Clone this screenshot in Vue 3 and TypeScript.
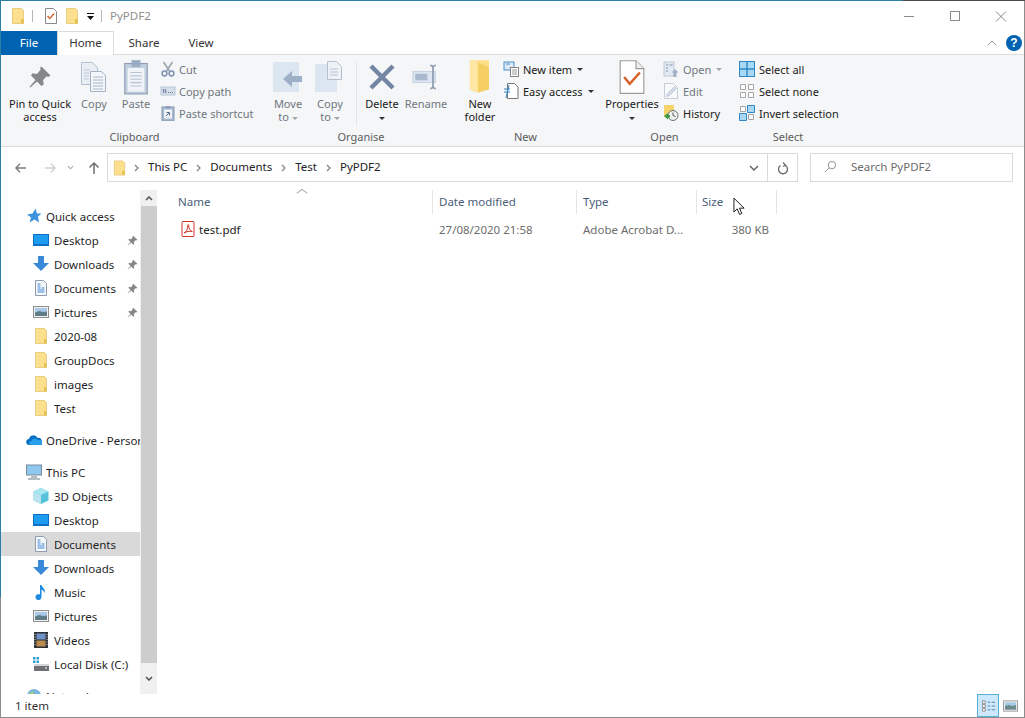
<script setup lang="ts">
interface NavItem {
  label: string
  icon: string
  pinned?: boolean
  active?: boolean
  top?: boolean
  gap?: boolean
}

const clipboardSmall = [
  { label: 'Cut', icon: 'i-cut' },
  { label: 'Copy path', icon: 'i-copypath' },
  { label: 'Paste shortcut', icon: 'i-shortcut' },
]
const newSmall = [
  { label: 'New item', icon: 'i-newitem', drop: true },
  { label: 'Easy access', icon: 'i-easy', drop: true },
]
const openSmall = [
  { label: 'Open', icon: 'i-open', drop: true, muted: true },
  { label: 'Edit', icon: 'i-edit', muted: true },
  { label: 'History', icon: 'i-history' },
]
const selectSmall = [
  { label: 'Select all', icon: 'i-selall' },
  { label: 'Select none', icon: 'i-selnone' },
  { label: 'Invert selection', icon: 'i-selinv' },
]

const crumbs = ['This PC', 'Documents', 'Test', 'PyPDF2']

const nav: NavItem[] = [
  { label: 'Quick access', icon: 'i-star', top: true },
  { label: 'Desktop', icon: 'i-desktop', pinned: true },
  { label: 'Downloads', icon: 'i-down', pinned: true },
  { label: 'Documents', icon: 'i-docs', pinned: true },
  { label: 'Pictures', icon: 'i-pics', pinned: true },
  { label: '2020-08', icon: 'i-folder' },
  { label: 'GroupDocs', icon: 'i-folder' },
  { label: 'images', icon: 'i-folder' },
  { label: 'Test', icon: 'i-folder' },
  { label: 'OneDrive - Personal', icon: 'i-cloud', top: true, gap: true },
  { label: 'This PC', icon: 'i-pc', top: true, gap: true },
  { label: '3D Objects', icon: 'i-cube' },
  { label: 'Desktop', icon: 'i-desktop' },
  { label: 'Documents', icon: 'i-docs', active: true },
  { label: 'Downloads', icon: 'i-down' },
  { label: 'Music', icon: 'i-music' },
  { label: 'Pictures', icon: 'i-pics' },
  { label: 'Videos', icon: 'i-video' },
  { label: 'Local Disk (C:)', icon: 'i-disk' },
  { label: 'Network', icon: 'i-net', top: true, gap: true },
]
</script>

<template>
  <div class="window">
    <svg class="defs" xmlns="http://www.w3.org/2000/svg">
      <symbol id="i-folder" viewBox="0 0 16 16">
        <path d="M2.5.5h9l2 2v13h-11z" fill="#fde08e" stroke="#e6cd83" />
        <path d="M11 11h2.5v4.5H11z" fill="#e8c04c" />
      </symbol>
      <symbol id="i-props" viewBox="0 0 16 16">
        <path d="M2.5.5h8l3 3v12h-11z" fill="#fff" stroke="#8a8a8a" />
        <path d="M4.5 8l2.2 2.5 4.5-5" fill="none" stroke="#d9622b" stroke-width="1.3" />
      </symbol>
      <symbol id="i-pin" viewBox="0 0 16 16">
        <path d="M9 1l6 6-1.5 1-1-.5L10 10l.5 3-1.5 1-3-3-4.500 4-.5-.5 4-4.500-3-3 1-1.500 3 .5L8.500 3 8 2z" fill="#85878a" />
      </symbol>
      <symbol id="i-copy" viewBox="0 0 32 32">
        <path d="M3.5 1.5h11l5 5v17h-16z" fill="#e9eef5" stroke="#b3c0d0" />
        <path d="M12.5 10.5h11l4 4v16h-15z" fill="#f2f5f9" stroke="#a4b2c4" />
        <path d="M15 16h10M15 19h10M15 22h10M15 25h10M15 28h10" stroke="#a9b8cb" />
        <path d="M6 9h6M6 12h5M6 15h5M6 18h5" stroke="#bcc8d8" />
      </symbol>
      <symbol id="i-paste" viewBox="0 0 24 32">
        <rect x="2" y="4" width="20" height="27" fill="#c2cede" stroke="#8b9cb3" />
        <rect x="4.5" y="8" width="15" height="21" fill="#f0f3f7" />
        <path d="M7 12h10M7 15h10M7 18h10M7 21h10M7 24h10" stroke="#b8c5d6" />
        <rect x="8" y="1" width="8" height="6" fill="#9badc4" />
      </symbol>
      <symbol id="i-cut" viewBox="0 0 16 16">
        <path d="M3.500 1l6 9M12.500 1l-6 9" stroke="#9aa2ab" stroke-width="1.5" fill="none" />
        <circle cx="4.5" cy="12.5" r="2.4" fill="none" stroke="#7f93b3" stroke-width="1.5" />
        <circle cx="11.5" cy="12.5" r="2.4" fill="none" stroke="#7f93b3" stroke-width="1.5" />
      </symbol>
      <symbol id="i-copypath" viewBox="0 0 16 16">
        <rect x="1" y="4" width="14" height="8" fill="#d4deeb" stroke="#b9c6d6" />
        <path d="M3 6l1 4M5 6l1 4M8 9.500h1M10 9.500h1M12 9.500h1" stroke="#5e7390" />
      </symbol>
      <symbol id="i-shortcut" viewBox="0 0 16 16">
        <rect x="2" y="2" width="12" height="14" fill="#a9b9cd" stroke="#8497b0" />
        <rect x="4" y="4.5" width="8" height="9" fill="#eef2f6" />
        <path d="M6 11l3-3M6.500 7.500H9.500V10.500" stroke="#5b7190" fill="none" />
        <rect x="5.5" y="1" width="5" height="2.5" fill="#8ea1b9" />
      </symbol>
      <symbol id="i-move" viewBox="0 0 32 32">
        <rect x="1" y="1" width="26" height="30" fill="#dbe6f1" />
        <path d="M11 18l9-8v5h10v6H20v5z" fill="#9eb0c8" />
      </symbol>
      <symbol id="i-copyto" viewBox="0 0 32 32">
        <rect x="1" y="3" width="22" height="28" fill="#dbe6f1" />
        <path d="M13.500.5h9l5 5v13h-14z" fill="#eef2f7" stroke="#b3c0d0" />
        <path d="M16 8h8M16 11h8M16 14h8" stroke="#b3c0d0" />
      </symbol>
      <symbol id="i-delete" viewBox="0 0 28 28">
        <path d="M3 3l22 22M25 3L3 25" stroke="#7385a3" stroke-width="4.5" />
      </symbol>
      <symbol id="i-rename" viewBox="0 0 30 28">
        <rect x="1" y="8" width="24" height="12" fill="#dce5f0" stroke="#c3d0df" />
        <rect x="3.5" y="10.5" width="13" height="7" fill="#a9b9cf" />
        <path d="M19.500 1.500c2 0 2.500 1 3 2 .5-1 1-2 3-2M22.500 3.500v21M19.500 26.500c2 0 2.500-1 3-2 .5 1 1 2 3 2" fill="none" stroke="#8b9aae" stroke-width="1.8" />
      </symbol>
      <symbol id="i-newfolder" viewBox="0 0 20 32">
        <path d="M1 1h17v25l-11 0v4l-6-3z" fill="#fddf87" />
        <path d="M8 3l10 4v20l-10 3z" fill="#f6cf64" />
        <path d="M1 1h7v29l-7-3z" fill="#fde7a3" />
      </symbol>
      <symbol id="i-newitem" viewBox="0 0 16 16">
        <rect x="1" y="1" width="10" height="8" fill="#dceaf7" stroke="#4a90c8" />
        <path d="M3 3h4" stroke="#4a90c8" />
        <rect x="7.5" y="6.5" width="8" height="9" fill="#fff" stroke="#858585" />
        <path d="M9 9h5M9 11h5M9 13h5" stroke="#9a9a9a" />
      </symbol>
      <symbol id="i-easy" viewBox="0 0 16 16">
        <path d="M4.500.5h7L15 4v11.500H4.500z" fill="#fff" stroke="#777" />
        <path d="M1 6h6M1 9h6M6 2l-3 13" stroke="#2d7fbf" fill="none" />
      </symbol>
      <symbol id="i-propsbig" viewBox="0 0 24 32">
        <path d="M1.500 1.500h14l7 7v22h-21z" fill="#fff" stroke="#9a9a9a" />
        <path d="M15.500 1.500v7h7" fill="#eee" stroke="#9a9a9a" />
        <path d="M5 16l5 6 9-10" fill="none" stroke="#d9622b" stroke-width="2.2" />
      </symbol>
      <symbol id="i-open" viewBox="0 0 16 16">
        <rect x="1" y="1" width="10" height="14" fill="#e2e9f1" stroke="#bcc8d6" />
        <path d="M3 4h2M3 7h2M3 10h2M6.500 4h3" stroke="#9fb0c5" stroke-width="1.5" />
        <path d="M12 8l3.500 3.500h-2V16h-3v-4.500h-2z" fill="#9fb0c5" />
      </symbol>
      <symbol id="i-edit" viewBox="0 0 16 16">
        <path d="M1.500.5h9l4 4v11h-13z" fill="#f7f9fb" stroke="#c5ccd5" />
        <path d="M3.500 13.500l1-3 7-7 2 2-7 7z" fill="#d3dce6" stroke="#b4c0ce" stroke-width=".7" />
      </symbol>
      <symbol id="i-history" viewBox="0 0 16 16">
        <rect x="1" y="0" width="10" height="12" fill="#f6d36a" />
        <circle cx="10" cy="10.5" r="5" fill="#eef0ee" stroke="#66706a" />
        <path d="M10 7.500v3l2.500 1" stroke="#555" fill="none" />
        <path d="M1 11l4-3v2h2v2.500H5v2z" fill="#3e9a46" />
      </symbol>
      <symbol id="i-selall" viewBox="0 0 16 16">
        <rect x=".5" y=".5" width="15" height="15" fill="#a8d8f5" stroke="#2f88c5" />
        <path d="M8 0v16M0 8h16" stroke="#2f88c5" stroke-width="1.4" />
      </symbol>
      <symbol id="i-selnone" viewBox="0 0 16 16">
        <path d="M1.500 1.500h5v5h-5zM9.500 1.500h5v5h-5zM1.500 9.500h5v5h-5zM9.500 9.500h5v5h-5z" fill="#fff" stroke="#a5a5a5" />
      </symbol>
      <symbol id="i-selinv" viewBox="0 0 16 16">
        <path d="M1.500 1.500h5v5h-5zM9.500 9.500h5v5h-5z" fill="#fff" stroke="#a5a5a5" />
        <path d="M8.500.5h7v7h-7zM.5 8.500h7v7h-7z" fill="#a8d8f5" stroke="#2f88c5" />
      </symbol>
      <symbol id="i-star" viewBox="0 0 16 16">
        <path d="M9.500.5l1.500 5h4.500l-3.500 3 1 6-4.500-3-5 3 1.500-5-4-3 5.500-1z" fill="#3d94dc" />
      </symbol>
      <symbol id="i-desktop" viewBox="0 0 16 16">
        <rect x="0" y="2" width="16" height="12" fill="#0f6fc6" />
        <rect x="1" y="3" width="14" height="9" fill="#1e9cf0" />
      </symbol>
      <symbol id="i-down" viewBox="0 0 16 16">
        <path d="M5 0h6v7h5l-8 8-8-8h5z" fill="#3a88d8" />
      </symbol>
      <symbol id="i-docs" viewBox="0 0 16 16">
        <path d="M2.500.5h8l3 3v12h-11z" fill="#f7f9fc" stroke="#8d9bac" />
        <path d="M4.500 4h3M4.500 6h3M8.500 8h3M4.500 8h3M4.500 10h7M4.500 12h7" stroke="#3f8bd0" />
      </symbol>
      <symbol id="i-pics" viewBox="0 0 16 16">
        <rect x=".5" y="2.5" width="15" height="11" fill="#f2f2f2" stroke="#8e8e8e" />
        <rect x="2" y="4" width="12" height="4.5" fill="#a9c9e6" />
        <path d="M2 8.500l4-1.500 4 1 4-.5V12H2z" fill="#5f7b88" />
      </symbol>
      <symbol id="i-cloud" viewBox="0 0 16 12">
        <path d="M3.500 11a3 3 0 0 1-.5-6 4.500 4.500 0 0 1 8.500-1A3.500 3.500 0 0 1 13 11z" fill="#0a6fc4" />
        <path d="M5 11a2 2 0 0 1 .5-4 3.500 3.500 0 0 1 6.500-.5 2.500 2.500 0 0 1 3.800 4.500z" fill="#2aa0ea" />
      </symbol>
      <symbol id="i-pc" viewBox="0 0 16 16">
        <rect x=".5" y="1" width="15" height="10" fill="#8ec8ef" stroke="#7a8a99" />
        <path d="M5 13h6M2 15h12" stroke="#9aa5b0" stroke-width="1.3" />
      </symbol>
      <symbol id="i-cube" viewBox="0 0 16 16">
        <path d="M8 0l7.500 3.500v9L8 16 .5 12.500v-9z" fill="#56c2dc" />
        <path d="M8 0l7.500 3.500L8 7 .5 3.500z" fill="#a8e6f2" />
        <path d="M.5 3.500L8 7v9L.5 12.500z" fill="#b9e4ee" />
      </symbol>
      <symbol id="i-music" viewBox="0 0 16 16">
        <path d="M7 1h1.500c.5 3 4.500 3.500 3 8-.5-2-2-3-3-3.500V13a3 3 0 1 1-1.500-2.500z" fill="#1f8ae0" />
      </symbol>
      <symbol id="i-video" viewBox="0 0 16 16">
        <rect x="1" y="0" width="14" height="16" fill="#2f3136" />
        <rect x="3.5" y="1.5" width="9" height="6" fill="#6f93c6" />
        <rect x="3.5" y="8.5" width="9" height="6" fill="#b98b4f" />
        <path d="M2 2v12M14 2v12" stroke="#cfcfcf" stroke-dasharray="1 1.5" />
      </symbol>
      <symbol id="i-disk" viewBox="0 0 16 16">
        <path d="M0 1h2.500v2.500H0zM3.500 1H6v2.500H3.500zM0 4.500h2.500V7H0zM3.500 4.500H6V7H3.500z" fill="#2a9fd8" />
        <rect x="1" y="9" width="15" height="6" fill="#6e7073" />
        <rect x="1" y="8" width="15" height="2" fill="#d5d7d9" />
        <rect x="12" y="11.5" width="2" height="1" fill="#fff" />
      </symbol>
      <symbol id="i-net" viewBox="0 0 16 16">
        <circle cx="8" cy="8" r="7" fill="#7ab4de" />
        <path d="M3 5l4-2 1 3-3 2zM9 9l4-1-1 4-3 1z" fill="#9ccb8c" />
      </symbol>
      <symbol id="i-pdf" viewBox="0 0 14 16">
        <rect x="1" y=".5" width="12" height="15" rx="1" fill="#fff" stroke="#d3312a" />
        <path d="M3 12c2-.5 4-4 3.800-7.500C6.700 3 7.800 3 7.700 4.500 7.500 7 9 10 11.300 10.500 9 10 5 10.500 3 12z" fill="none" stroke="#d3312a" />
      </symbol>
    </svg>

    <header class="titlebar">
      <div class="quick">
        <svg class="qa-ico"><use href="#i-folder" /></svg>
        <span class="qa-sep"></span>
        <svg class="qa-ico qa-ico--doc"><use href="#i-props" /></svg>
        <svg class="qa-ico"><use href="#i-folder" /></svg>
        <svg class="qa-more" viewBox="0 0 9 8"><path d="M1 .5h7" stroke="#111" /><path d="M1 3h7L4.500 7z" fill="#111" /></svg>
        <span class="qa-sep"></span>
        <span class="title">PyPDF2</span>
      </div>
      <div class="controls">
        <svg viewBox="0 0 46 30"><path d="M18 15.5h10" stroke="#8a8a8a" /></svg>
        <svg viewBox="0 0 46 30"><rect x="18.5" y="10.5" width="9" height="9" fill="none" stroke="#8a8a8a" /></svg>
        <svg viewBox="0 0 46 30"><path d="M18 10.5l10 10M28 10.5l-10 10" stroke="#8a8a8a" /></svg>
      </div>
    </header>

    <nav class="tabs">
      <span class="tab tab--file">File</span>
      <span class="tab tab--on">Home</span>
      <span class="tab">Share</span>
      <span class="tab">View</span>
      <span class="tabs__fill"></span>
      <svg class="tabs__chev" viewBox="0 0 10 6"><path d="M1 5l4-4 4 4" fill="none" stroke="#9a9a9a" /></svg>
      <span class="help">?</span>
    </nav>

    <section class="ribbon">
      <div class="group group--clip">
        <div class="group__body">
          <div class="big big--pin">
            <svg class="ico-pin"><use href="#i-pin" /></svg>
            <span>Pin to Quick<br />access</span>
          </div>
          <div class="big big--w42 muted">
            <svg class="ico-32"><use href="#i-copy" /></svg>
            <span>Copy</span>
          </div>
          <div class="big big--w42 muted">
            <svg class="ico-32"><use href="#i-paste" /></svg>
            <span>Paste</span>
          </div>
          <ul class="small small--clip muted">
            <li v-for="s in clipboardSmall" :key="s.label">
              <svg><use :href="'#' + s.icon" /></svg>{{ s.label }}
            </li>
          </ul>
        </div>
        <div class="group__label">Clipboard</div>
      </div>

      <div class="group group--org">
        <div class="group__body">
          <div class="big big--w40 muted">
            <svg class="ico-32"><use href="#i-move" /></svg>
            <span>Move<br />to <i class="caret caret--muted"></i></span>
          </div>
          <div class="big big--w44 muted">
            <svg class="ico-32"><use href="#i-copyto" /></svg>
            <span>Copy<br />to <i class="caret caret--muted"></i></span>
          </div>
          <span class="vline"></span>
          <div class="big big--w44">
            <svg class="ico-28"><use href="#i-delete" /></svg>
            <span>Delete<br /><i class="caret"></i></span>
          </div>
          <div class="big big--w44 muted">
            <svg class="ico-28"><use href="#i-rename" /></svg>
            <span>Rename</span>
          </div>
        </div>
        <div class="group__label">Organise</div>
      </div>

      <div class="group group--new">
        <div class="group__body">
          <div class="big big--w52">
            <svg class="ico-32"><use href="#i-newfolder" /></svg>
            <span>New<br />folder</span>
          </div>
          <ul class="small small--new">
            <li v-for="s in newSmall" :key="s.label">
              <svg><use :href="'#' + s.icon" /></svg>{{ s.label }}<i v-if="s.drop" class="caret caret--side"></i>
            </li>
          </ul>
        </div>
        <div class="group__label">New</div>
      </div>

      <div class="group group--open">
        <div class="group__body">
          <div class="big big--w54">
            <svg class="ico-32"><use href="#i-propsbig" /></svg>
            <span>Properties<br /><i class="caret"></i></span>
          </div>
          <ul class="small small--open">
            <li v-for="s in openSmall" :key="s.label" :class="{ muted: s.muted }">
              <svg><use :href="'#' + s.icon" /></svg>{{ s.label }}<i v-if="s.drop" class="caret caret--side caret--muted"></i>
            </li>
          </ul>
        </div>
        <div class="group__label">Open</div>
      </div>

      <div class="group group--select">
        <div class="group__body">
          <ul class="small small--select">
            <li v-for="s in selectSmall" :key="s.label">
              <svg><use :href="'#' + s.icon" /></svg>{{ s.label }}
            </li>
          </ul>
        </div>
        <div class="group__label">Select</div>
      </div>
    </section>

    <div class="addressbar">
      <div class="arrows">
        <svg viewBox="0 0 14 12" class="arrow"><path d="M13 6H2M6.500 1.500L2 6l4.500 4.500" fill="none" stroke="#7a7a7a" stroke-width="1.4" /></svg>
        <svg viewBox="0 0 14 12" class="arrow arrow--fwd"><path d="M1 6h11M7.500 1.500L12 6l-4.500 4.500" fill="none" stroke="#d0d0d0" stroke-width="1.4" /></svg>
        <svg viewBox="0 0 8 5" class="arrow-recent"><path d="M1 1l3 3 3-3" fill="none" stroke="#a8a8a8" stroke-width="1.2" /></svg>
        <svg viewBox="0 0 12 14" class="arrow-up"><path d="M6 13V2M1.500 6.500L6 2l4.500 4.500" fill="none" stroke="#6f6f6f" stroke-width="1.5" /></svg>
      </div>
      <div class="address">
        <svg class="address__folder"><use href="#i-folder" /></svg>
        <template v-for="c in crumbs" :key="c">
          <svg class="crumb-sep" viewBox="0 0 5 8"><path d="M1 1l3 3-3 3" fill="none" stroke="#808080" stroke-width="1.2" /></svg>
          <span class="crumb">{{ c }}</span>
        </template>
        <span class="address__fill"></span>
        <svg class="address__drop" viewBox="0 0 10 6"><path d="M1 1l4 4 4-4" fill="none" stroke="#606060" stroke-width="1.4" /></svg>
        <span class="address__refresh">
          <svg viewBox="0 0 12 14"><path d="M3.500 4.500a4.500 4.500 0 1 0 5 0M6 1.500L8.500 4 6 5.500" fill="none" stroke="#6d6d6d" stroke-width="1.3" /></svg>
        </span>
      </div>
      <div class="search">
        <svg viewBox="0 0 14 14"><circle cx="8.5" cy="5.5" r="4" fill="none" stroke="#8a8a8a" /><path d="M5.500 8.500L1 13" stroke="#8a8a8a" /></svg>
        <span>Search PyPDF2</span>
      </div>
    </div>

    <main class="body">
      <aside class="navpane">
        <div class="navpane__list">
          <div
            v-for="(n, i) in nav"
            :key="i"
            class="navrow"
            :class="{ 'is-active': n.active, 'is-top': n.top, 'has-gap': n.gap }"
          >
            <svg class="navrow__ico"><use :href="'#' + n.icon" /></svg>
            <span class="navrow__label">{{ n.label }}</span>
            <svg v-if="n.pinned" class="navrow__pin"><use href="#i-pin" /></svg>
          </div>
        </div>
        <div class="scrollbar">
          <span class="scrollbar__btn"><svg viewBox="0 0 8 5"><path d="M1 4l3-3 3 3" fill="none" stroke="#505050" stroke-width="1.5" /></svg></span>
          <span class="scrollbar__thumb"></span>
          <span class="scrollbar__btn"><svg viewBox="0 0 8 5"><path d="M1 1l3 3 3-3" fill="none" stroke="#505050" stroke-width="1.5" /></svg></span>
        </div>
      </aside>

      <section class="files">
        <div class="cols cols--head">
          <span class="col col--name">Name<i class="sort"></i></span>
          <span class="col">Date modified</span>
          <span class="col">Type</span>
          <span class="col">Size</span>
        </div>
        <div class="cols cols--row">
          <span class="file"><svg><use href="#i-pdf" /></svg>test.pdf</span>
          <span class="cell">27/08/2020 21:58</span>
          <span class="cell">Adobe Acrobat D...</span>
          <span class="cell cell--size">380 KB</span>
        </div>
      </section>
    </main>

    <footer class="status">
      <span>1 item</span>
      <span class="status__fill"></span>
      <span class="viewbtn viewbtn--on">
        <svg viewBox="0 0 16 14"><path d="M1.500 1.500h3v3h-3zM1.500 5.500h3v3h-3zM1.500 9.500h3v3h-3z" fill="#fff" stroke="#8a8a8a" /><path d="M7 3h3M11.500 3H15M7 7h3M11.500 7H15M7 11h3M11.500 11H15" stroke="#5f7f9a" /></svg>
      </span>
      <span class="viewbtn">
        <svg viewBox="0 0 16 14"><rect x=".5" y="1.5" width="15" height="11" fill="#f4f4f4" stroke="#9a9a9a" /><rect x="2" y="3" width="12" height="4" fill="#a6cbe6" /><path d="M2 7l4-1 4 1 4-1v5H2z" fill="#6d8a8c" /></svg>
      </span>
    </footer>

    <svg class="cursor" viewBox="0 0 14 20">
      <path d="M1 1v15l3.500-3.500L7 18.500l2.500-1L7 11.800h5z" fill="#fff" stroke="#111" stroke-width="1" />
    </svg>
  </div>
</template>

<style>
html,
body {
  margin: 0;
  background: #fff;
}
</style>

<style scoped>
.window {
  position: relative;
  box-sizing: border-box;
  width: 1025px;
  height: 718px;
  padding: 1px;
  display: flex;
  flex-direction: column;
  overflow: hidden;
  font-family: "Noto Sans", "Liberation Sans", sans-serif;
  font-size: 11.5px;
  color: #1a1a1a;
  background:
    linear-gradient(#2f7ea6, #2f7ea6) 0 0 / 903px 1px no-repeat,
    linear-gradient(#4a4a4a, #4a4a4a) 903px 0 / 122px 1px no-repeat,
    linear-gradient(#2f7ea6, #2f7ea6) 0 0 / 1px 597px no-repeat,
    linear-gradient(#8c8c8c, #8c8c8c);
}

.defs {
  display: none;
}

.window > header,
.window > nav,
.window > section,
.window > div,
.window > main,
.window > footer {
  background: #fff;
}

.muted {
  color: #6f7780;
}

ul {
  list-style: none;
  margin: 0;
  padding: 0;
}

.titlebar {
  height: 30px;
  display: flex;
  align-items: center;
  justify-content: space-between;
  flex: none;
}

.quick {
  display: flex;
  align-items: center;
  padding-left: 9px;
}

.qa-ico {
  width: 16px;
  height: 16px;
  margin-right: 6px;
}

.qa-ico--doc {
  margin-left: 2px;
  margin-right: 5px;
}

.qa-sep {
  width: 1px;
  height: 12px;
  background: #b5b5b5;
  margin-right: 8px;
}

.qa-more {
  width: 9px;
  height: 8px;
  margin: 1px 6px 0 0;
}

.title {
  color: #8f8f8f;
  font-size: 11.5px;
  margin-bottom: 1px;
}

.controls {
  display: flex;
}

.controls svg {
  width: 46px;
  height: 30px;
}

.tabs {
  height: 24px;
  flex: none;
  display: flex;
  align-items: stretch;
  box-shadow: inset 0 -1px 0 #dadbdc;
}

.tab {
  box-sizing: border-box;
  width: 57px;
  display: flex;
  align-items: center;
  justify-content: center;
  padding-bottom: 2px;
  color: #333;
}

.tab:nth-child(3) {
  width: 60px;
}

.tab:nth-child(4) {
  width: 54px;
}

.tab--file {
  width: 56px;
  background: #0063b1;
  color: #fff;
}

.tab--on {
  background: #fff;
  border: 1px solid #dadbdc;
  border-bottom: 0;
}

.tabs__fill {
  flex: 1;
}

.tabs__chev {
  width: 10px;
  height: 6px;
  align-self: center;
  margin-right: 9px;
}

.help {
  width: 16px;
  height: 16px;
  align-self: center;
  margin-right: 2px;
  border-radius: 50%;
  background: #0063b1;
  color: #fff;
  font: 700 12px/16px "Liberation Sans", sans-serif;
  text-align: center;
}

.ribbon {
  flex: none;
  height: 92px;
  display: flex;
  background: #f5f6f7 !important;
  border-bottom: 1px solid #dadbdc;
  box-sizing: border-box;
}

.group {
  display: flex;
  flex-direction: column;
  flex: none;
}

.group--clip { width: 267px; }
.group--org { width: 186px; }
.group--new { width: 143px; }
.group--open { width: 135px; }
.group--select { width: 112px; }

.group__body {
  flex: 1;
  display: flex;
  align-items: flex-start;
  padding-top: 4px;
}

.group--clip .group__body { padding-left: 6px; }
.group--open .group__body { padding-left: 8px; }
.group--select .group__body { padding-left: 7px; }

.group__label {
  height: 18px;
  line-height: 18px;
  text-align: center;
  color: #5c5c5c;
  font-size: 11px;
}

.big {
  flex: none;
  display: flex;
  flex-direction: column;
  align-items: center;
  text-align: center;
  line-height: 13px;
  font-size: 11px;
}

.big svg {
  height: 36px;
  margin-bottom: 2px;
  flex: none;
}

.big span {
  white-space: nowrap;
}

.big--pin { width: 66px; }
.big--w40 { width: 40px; }
.big--w42 { width: 42px; }
.big--w44 { width: 44px; }
.big--w52 { width: 52px; }
.big--w54 { width: 54px; }

.ico-pin {
  width: 24px;
}

.ico-32 {
  width: 32px;
}

.ico-28 {
  width: 28px;
}

.vline {
  width: 1px;
  height: 64px;
  margin: 3px 3px 0 4px;
  background: #e3e5e7;
  flex: none;
}

.small {
  display: flex;
  flex-direction: column;
  flex: none;
  font-size: 11px;
  margin-top: -1px;
}

.small li {
  display: flex;
  align-items: center;
  height: 22px;
  white-space: nowrap;
}

.small svg {
  width: 16px;
  height: 16px;
  margin-right: 4px;
  flex: none;
}

.small--clip { margin-left: 3px; }
.small--clip svg { margin-right: 3px; }
.small--new { margin-left: -3px; }
.small--open { margin-left: 4px; }

.caret {
  display: inline-block;
  width: 0;
  height: 0;
  border: 3px solid transparent;
  border-top: 3px solid #333;
  border-bottom: 0;
  vertical-align: middle;
}

.caret--muted {
  border-top-color: #a5a5a5;
}

.caret--side {
  margin-left: 5px;
}

.addressbar {
  flex: none;
  height: 43px;
  display: flex;
  align-items: flex-start;
  padding-top: 6px;
  box-sizing: border-box;
}

.arrows {
  width: 106px;
  height: 29px;
  display: flex;
  align-items: center;
  flex: none;
}

.arrow {
  width: 13px;
  height: 12px;
  margin-left: 13px;
}

.arrow--fwd {
  margin-left: 17px;
}

.arrow-recent {
  width: 7px;
  height: 5px;
  margin-left: 10px;
}

.arrow-up {
  width: 12px;
  height: 14px;
  margin-left: 14px;
}

.address {
  box-sizing: border-box;
  width: 691px;
  height: 29px;
  border: 1px solid #d9d9d9;
  display: flex;
  align-items: center;
  flex: none;
  padding-left: 4px;
}

.address__folder {
  width: 15px;
  height: 16px;
  margin-right: 3px;
}

.crumb-sep {
  width: 5px;
  height: 8px;
  margin: 0 9px 0 4px;
}

.crumb {
  margin-right: 5px;
  margin-bottom: 2px;
  color: #222;
}

.address__fill {
  flex: 1;
}

.address__drop {
  width: 10px;
  height: 6px;
  margin-right: 8px;
}

.address__refresh {
  width: 29px;
  height: 100%;
  border-left: 1px solid #d9d9d9;
  display: flex;
  align-items: center;
  justify-content: center;
}

.address__refresh svg {
  width: 12px;
  height: 14px;
}

.search {
  box-sizing: border-box;
  width: 203px;
  height: 29px;
  margin-left: 12px;
  padding-bottom: 2px;
  border: 1px solid #d9d9d9;
  display: flex;
  align-items: center;
  padding-left: 13px;
  color: #6d6d6d;
}

.search svg {
  width: 13px;
  height: 13px;
  margin-right: 14px;
}

.body {
  flex: 1;
  min-height: 0;
  display: flex;
}

.navpane {
  width: 156px;
  flex: none;
  display: flex;
  overflow: hidden;
}

.navpane__list {
  width: 139px;
  flex: none;
  padding-top: 14px;
  overflow: hidden;
}

.navrow {
  height: 24px;
  display: flex;
  align-items: center;
  padding-left: 32px;
  white-space: nowrap;
}

.navrow.is-top {
  padding-left: 25px;
}

.navrow.has-gap {
  margin-top: 8px;
}

.navrow.is-active {
  background: #d9d9d9;
}

.navrow__ico {
  width: 16px;
  height: 16px;
  margin-right: 5px;
  flex: none;
}

.navrow.is-top .navrow__ico {
  margin-right: 4px;
}

.navrow__label {
  overflow: hidden;
  flex: 1;
  color: #1f1f1f;
}

.navrow__pin {
  width: 11px;
  height: 11px;
  margin: 0 2px 0 4px;
  flex: none;
}

.scrollbar {
  width: 17px;
  flex: none;
  display: flex;
  flex-direction: column;
  background: #f0f0f0;
  padding-left: 1px;
  box-sizing: border-box;
}

.scrollbar__btn {
  height: 16px;
  display: flex;
  align-items: center;
  justify-content: center;
  flex: none;
}

.scrollbar__btn:last-child {
  height: 31px;
}

.scrollbar__btn svg {
  width: 8px;
  height: 5px;
}

.scrollbar__thumb {
  flex: 1;
  background: #cdcdcd;
}

.files {
  flex: 1;
  min-width: 0;
  padding-left: 15px;
}

.cols {
  display: grid;
  grid-template-columns: 261px 144px 120px 80px;
}

.cols--head {
  height: 24px;
  color: #4c607a;
}

.col {
  position: relative;
  display: flex;
  align-items: center;
  padding-left: 6px;
  padding-bottom: 2px;
  box-shadow: inset -1px 0 0 #e5e5e5;
}

.col:last-child {
  padding-left: 5px;
}

.sort {
  position: absolute;
  left: 126px;
  top: -1px;
  width: 7px;
  height: 7px;
  border-left: 1px solid #9a9a9a;
  border-top: 1px solid #9a9a9a;
  transform: scaleY(.7) rotate(45deg);
}

.cols--row {
  height: 22px;
  margin-top: 4px;
  align-items: center;
  color: #6d6d6d;
}

.file {
  display: flex;
  align-items: center;
  padding-left: 9px;
  color: #222;
}

.file svg {
  width: 14px;
  height: 16px;
  margin-right: 4px;
}

.cell {
  padding-left: 6px;
  white-space: nowrap;
}

.cell--size {
  padding-left: 0;
  padding-right: 8px;
  text-align: right;
}

.status {
  flex: none;
  height: 23px;
  display: flex;
  align-items: center;
  padding-left: 14px;
  color: #333;
}

.status__fill {
  flex: 1;
}

.viewbtn {
  box-sizing: border-box;
  width: 22px;
  height: 23px;
  display: flex;
  align-items: center;
  justify-content: center;
}

.viewbtn:last-child {
  margin-right: 3px;
}

.viewbtn svg {
  width: 15px;
  height: 14px;
}

.viewbtn--on {
  background: #cce8ff;
  border: 1px solid #5ab0d8;
}

.cursor {
  position: absolute;
  left: 733px;
  top: 197px;
  width: 13px;
  height: 19px;
}
</style>
